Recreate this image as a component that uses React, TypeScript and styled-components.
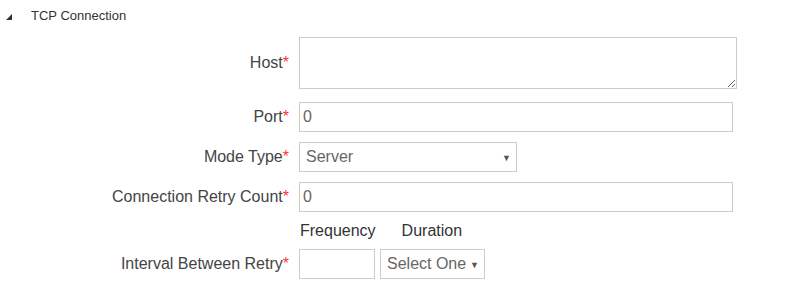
import styled, { createGlobalStyle } from "styled-components";

const GlobalStyle = createGlobalStyle`
    body {
        margin: 0;
        background: #fff;
        font-family: "Liberation Sans", Arial, sans-serif;
        color: #333;
    }
`;

interface FieldProps {
    label: string;
    required?: boolean;
    children?: React.ReactNode;
    gapBelow?: number;
}

function Field({ label, required = false, children, gapBelow = 10 }: FieldProps) {
    return (
        <Row $gapBelow={gapBelow}>
            <Label>
                {label}
                {required && <Required>*</Required>}
            </Label>
            <Control>{children}</Control>
        </Row>
    );
}

export default function App() {
    return (
        <Panel>
            <GlobalStyle />
            <Header>
                <svg width='6' height='6' viewBox='0 0 6 6'>
                    <polygon points='6,0 6,6 0,6' fill='#333' />
                </svg>
                <span>TCP Connection</span>
            </Header>
            <Form>
                <Field label='Host' required gapBelow={13}>
                    <TextArea />
                </Field>
                <Field label='Port' required>
                    <TextInput $width={434} defaultValue='0' />
                </Field>
                <Field label='Mode Type' required>
                    <FakeSelect $width={218}>
                        <span>Server</span>
                        <Caret>▼</Caret>
                    </FakeSelect>
                </Field>
                <Field label='Connection Retry Count' required gapBelow={6}>
                    <TextInput $width={434} defaultValue='0' />
                </Field>
                <Field label='' gapBelow={5}>
                    <SubHeadings>
                        <span>Frequency</span>
                        <span>Duration</span>
                    </SubHeadings>
                </Field>
                <Field label='Interval Between Retry' required>
                    <Inline>
                        <TextInput $width={76} />
                        <FakeSelect $width={105}>
                            <span>Select One</span>
                            <Caret>▼</Caret>
                        </FakeSelect>
                    </Inline>
                </Field>
            </Form>
        </Panel>
    );
}

const Panel = styled.div`
    width: 795px;
    height: 288px;
    overflow: hidden;
`;

const Header = styled.div`
    display: flex;
    align-items: center;
    height: 30px;
    padding-left: 6px;
    font-size: 13px;
    color: #333;
    svg {
        margin-right: 19px;
        margin-top: 4px;
    }
`;

const Form = styled.div`
    display: flex;
    flex-direction: column;
    padding-top: 7px;
`;

const Row = styled.div<{ $gapBelow: number }>`
    display: grid;
    grid-template-columns: 289px auto;
    column-gap: 10px;
    align-items: center;
    margin-bottom: ${(p) => p.$gapBelow}px;
`;

const Label = styled.label`
    text-align: right;
    font-size: 16px;
    color: #444;
`;

const Required = styled.span`
    color: #f33;
    font-size: 16px;
    vertical-align: top;
    position: relative;
    top: 0;
`;

const Control = styled.div`
    display: flex;
`;

const TextArea = styled.textarea`
    display: block;
    box-sizing: border-box;
    width: 438px;
    height: 52px;
    margin: 0;
    border: 1px solid #ccc;
    border-radius: 0;
    outline: none;
`;

const TextInput = styled.input<{ $width: number }>`
    box-sizing: border-box;
    width: ${(p) => p.$width}px;
    height: 30px;
    margin: 0;
    padding: 0 3px;
    border: 1px solid #ccc;
    border-radius: 0;
    font-family: "Liberation Sans", Arial, sans-serif;
    font-size: 16px;
    color: #666;
    outline: none;
`;

const FakeSelect = styled.div<{ $width: number }>`
    box-sizing: border-box;
    display: flex;
    align-items: center;
    justify-content: space-between;
    width: ${(p) => p.$width}px;
    height: 30px;
    padding: 0 5px 0 6px;
    border: 1px solid #ccc;
    font-size: 16px;
    color: #666;
`;

const Caret = styled.span`
    font-size: 9px;
    color: #555;
    margin-top: 2px;
`;

const Inline = styled.div`
    display: flex;
    gap: 5px;
`;

const SubHeadings = styled.div`
    display: flex;
    gap: 26px;
    height: 26px;
    align-items: center;
    padding-left: 1px;
    font-size: 16px;
    color: #333;
`;
